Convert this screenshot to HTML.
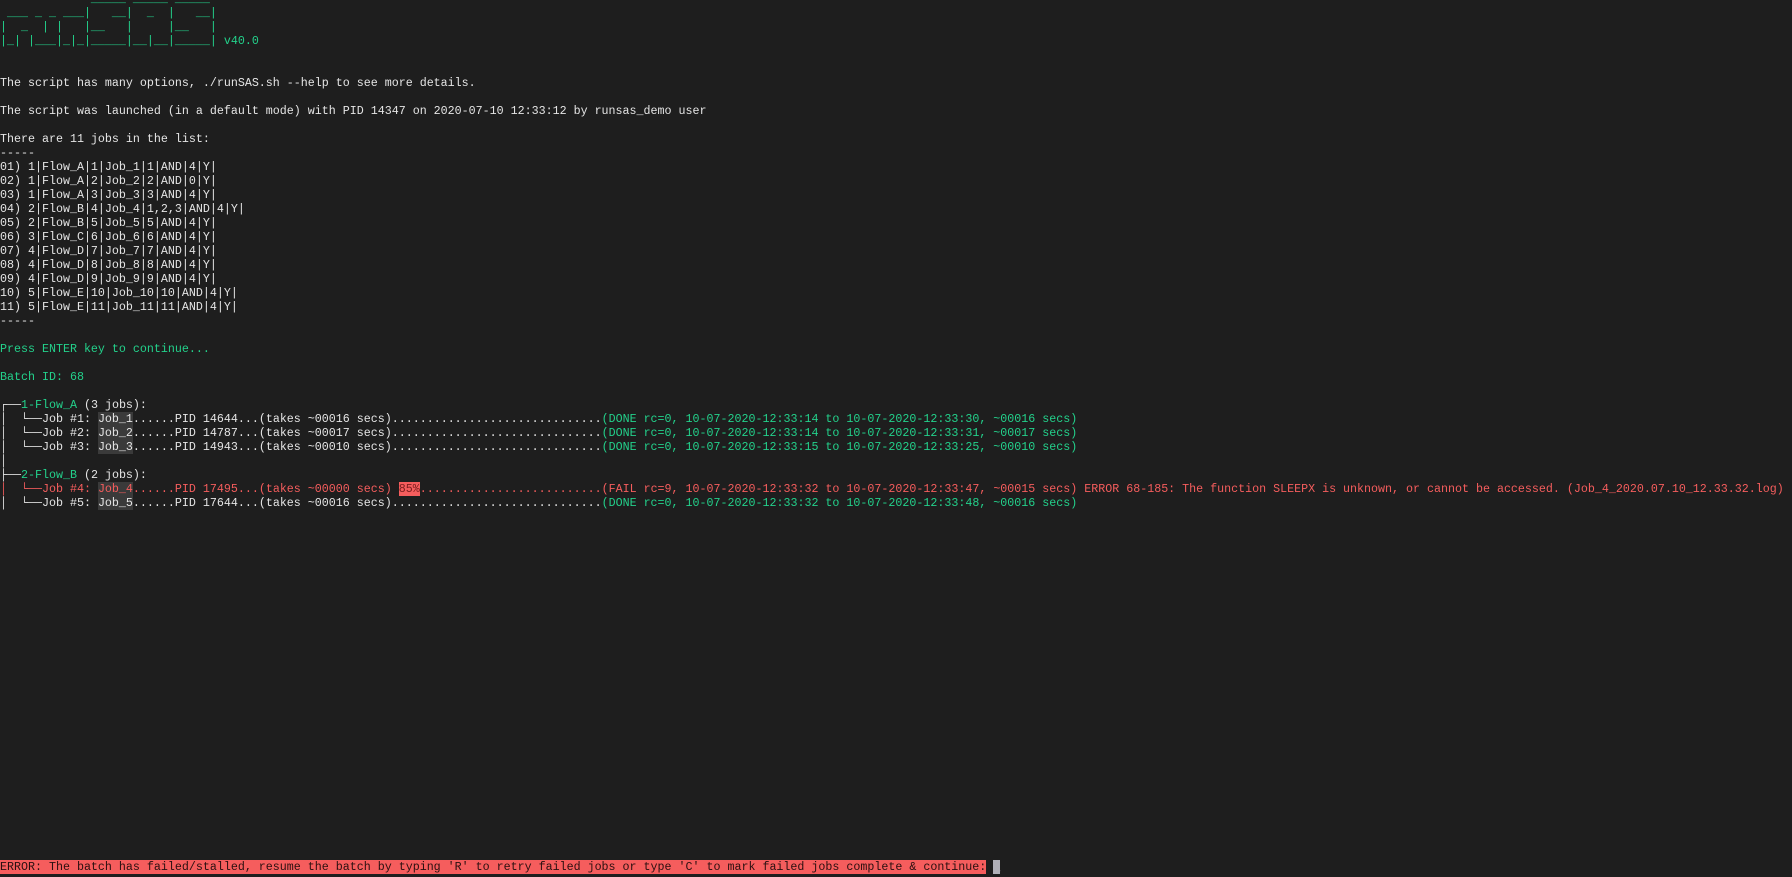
<!DOCTYPE html>
<html><head><meta charset="utf-8"><style>
html,body{margin:0;padding:0;background:#1e1e1e;width:1792px;height:877px;overflow:hidden}
pre{margin:0;position:absolute;left:0;top:-8px;font-family:"Liberation Mono",monospace;font-size:11.67px;line-height:14px;color:#e5e5e5;white-space:pre}
.g{color:#23d18b}.r{color:#f55d5d}
.h{background:#3a3a3a}
.rb{background:#f55d5d;color:#7a1e1e}
.eb{background:#f55d5d;color:#2a1010}
.cur{background:#b0b0b8;color:#b0b0b8}
</style></head><body><pre><span class="g">             _____ _____ _____
 ___ _ _ ___|   __|  _  |   __|
|  _  | |   |__   |     |__   |
|_| |___|_|_|_____|__|__|_____| v40.0</span>


The script has many options, ./runSAS.sh --help to see more details.

The script was launched (in a default mode) with PID 14347 on 2020-07-10 12:33:12 by runsas_demo user

There are 11 jobs in the list:
-----
01) 1|Flow_A|1|Job_1|1|AND|4|Y|
02) 1|Flow_A|2|Job_2|2|AND|0|Y|
03) 1|Flow_A|3|Job_3|3|AND|4|Y|
04) 2|Flow_B|4|Job_4|1,2,3|AND|4|Y|
05) 2|Flow_B|5|Job_5|5|AND|4|Y|
06) 3|Flow_C|6|Job_6|6|AND|4|Y|
07) 4|Flow_D|7|Job_7|7|AND|4|Y|
08) 4|Flow_D|8|Job_8|8|AND|4|Y|
09) 4|Flow_D|9|Job_9|9|AND|4|Y|
10) 5|Flow_E|10|Job_10|10|AND|4|Y|
11) 5|Flow_E|11|Job_11|11|AND|4|Y|
-----

<span class="g">Press ENTER key to continue...</span>

<span class="g">Batch ID: 68</span>

┌──<span class="g">1-Flow_A</span> (3 jobs):
│  └──Job #1: <span class="h">Job_1</span>......PID 14644...(takes ~00016 secs)..............................<span class="g">(DONE rc=0, 10-07-2020-12:33:14 to 10-07-2020-12:33:30, ~00016 secs)</span>
│  └──Job #2: <span class="h">Job_2</span>......PID 14787...(takes ~00017 secs)..............................<span class="g">(DONE rc=0, 10-07-2020-12:33:14 to 10-07-2020-12:33:31, ~00017 secs)</span>
│  └──Job #3: <span class="h">Job_3</span>......PID 14943...(takes ~00010 secs)..............................<span class="g">(DONE rc=0, 10-07-2020-12:33:15 to 10-07-2020-12:33:25, ~00010 secs)</span>
│
├──<span class="g">2-Flow_B</span> (2 jobs):
<span class="r">│  └──Job #4: <span class="h">Job_4</span>......PID 17495...(takes ~00000 secs) <span class="rb">85%</span>..........................(FAIL rc=9, 10-07-2020-12:33:32 to 10-07-2020-12:33:47, ~00015 secs) ERROR 68-185: The function SLEEPX is unknown, or cannot be accessed. (Job_4_2020.07.10_12.33.32.log)</span>
│  └──Job #5: <span class="h">Job_5</span>......PID 17644...(takes ~00016 secs)..............................<span class="g">(DONE rc=0, 10-07-2020-12:33:32 to 10-07-2020-12:33:48, ~00016 secs)</span>

























<span class="eb">ERROR: The batch has failed/stalled, resume the batch by typing 'R' to retry failed jobs or type 'C' to mark failed jobs complete &amp; continue:</span> <span class="cur">_</span></pre></body></html>
